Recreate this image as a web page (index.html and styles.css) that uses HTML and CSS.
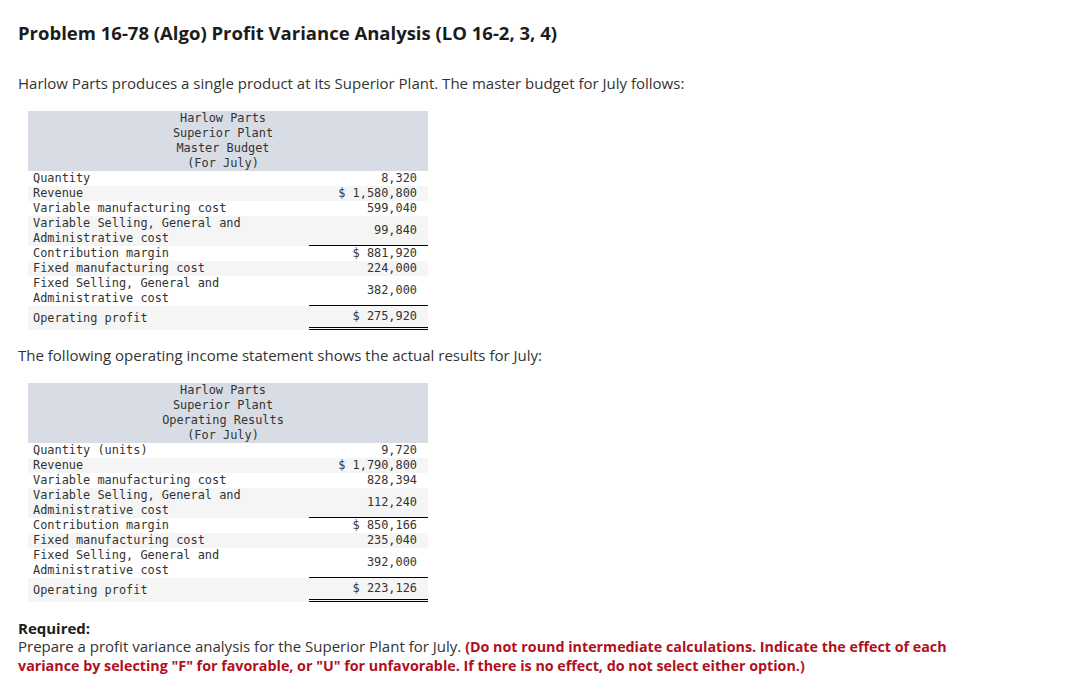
FILE: index.html
```html
<!DOCTYPE html>
<html>
<head>
<meta charset="utf-8">
<link rel="stylesheet" href="styles.css">
</head>
<body>
<div class="page">
  <h1 class="title">Problem 16-78 (Algo) Profit Variance Analysis (LO 16-2, 3, 4)</h1>
  <p class="intro">Harlow Parts produces a single product at its Superior Plant. The master budget for July follows:</p>
  <table class="stmt">
    <thead>
      <tr><th colspan="2">Harlow Parts<br>Superior Plant<br>Master Budget<br>(For July)</th></tr>
    </thead>
    <tbody>
      <tr><td class="lbl">Quantity</td><td class="num">8,320</td></tr>
      <tr><td class="lbl">Revenue</td><td class="num">$ 1,580,800</td></tr>
      <tr><td class="lbl">Variable manufacturing cost</td><td class="num">599,040</td></tr>
      <tr><td class="lbl">Variable Selling, General and Administrative cost</td><td class="num line">99,840</td></tr>
      <tr><td class="lbl">Contribution margin</td><td class="num">$ 881,920</td></tr>
      <tr><td class="lbl">Fixed manufacturing cost</td><td class="num">224,000</td></tr>
      <tr><td class="lbl">Fixed Selling, General and Administrative cost</td><td class="num line">382,000</td></tr>
      <tr class="total"><td class="lbl">Operating profit</td><td class="num dbl">$ 275,920</td></tr>
    </tbody>
  </table>
  <p class="intro second">The following operating income statement shows the actual results for July:</p>
  <table class="stmt">
    <thead>
      <tr><th colspan="2">Harlow Parts<br>Superior Plant<br>Operating Results<br>(For July)</th></tr>
    </thead>
    <tbody>
      <tr><td class="lbl">Quantity (units)</td><td class="num">9,720</td></tr>
      <tr><td class="lbl">Revenue</td><td class="num">$ 1,790,800</td></tr>
      <tr><td class="lbl">Variable manufacturing cost</td><td class="num">828,394</td></tr>
      <tr><td class="lbl">Variable Selling, General and Administrative cost</td><td class="num line">112,240</td></tr>
      <tr><td class="lbl">Contribution margin</td><td class="num">$ 850,166</td></tr>
      <tr><td class="lbl">Fixed manufacturing cost</td><td class="num">235,040</td></tr>
      <tr><td class="lbl">Fixed Selling, General and Administrative cost</td><td class="num line">392,000</td></tr>
      <tr class="total"><td class="lbl">Operating profit</td><td class="num dbl">$ 223,126</td></tr>
    </tbody>
  </table>
  <div class="required">
    <div class="req-head">Required:</div>
    <div class="req-text">Prepare a profit variance analysis for the Superior Plant for July. <strong class="warn">(Do not round intermediate calculations. Indicate the effect of each variance by selecting "F" for favorable, or "U" for unfavorable. If there is no effect, do not select either option.)</strong></div>
  </div>
</div>
</body>
</html>
```

FILE: styles.css
```css
html, body {
  margin: 0;
  padding: 0;
  background: #ffffff;
}

.page {
  padding: 22px 84px 0 18px;
  font-family: "Open Sans", "Liberation Sans", sans-serif;
  color: #333333;
}

.title {
  margin: 0;
  font-size: 18.5px;
  line-height: 22px;
  font-weight: 700;
  color: #1c1c1c;
}

.intro {
  margin: 30px 0 0 0;
  font-size: 15px;
  line-height: 18px;
}

.intro.second {
  margin-top: 16px;
}

.stmt {
  margin: 19px 0 0 10px;
  width: 400px;
  border-collapse: separate;
  border-spacing: 0;
  font-family: "DejaVu Sans Mono", "Liberation Mono", monospace;
  font-size: 11.9px;
  line-height: 15px;
  color: #333333;
}

.stmt th {
  background: #d8dce5;
  font-weight: 400;
  text-align: center;
  padding: 0 10px 0 0;
}

.stmt td {
  padding: 0;
  vertical-align: middle;
}

.stmt td.lbl {
  padding-left: 5px;
}

.stmt td.num {
  width: 108px;
  text-align: right;
  padding-right: 11px;
  white-space: nowrap;
}

.stmt tbody tr:nth-child(even) td {
  background: #f5f5f5;
}

.stmt td.line {
  border-bottom: 1px solid #000000;
}

.stmt tr.total td.num {
  padding-top: 3px;
  padding-bottom: 3px;
  vertical-align: top;
}

.stmt td.dbl {
  border-bottom: 3px double #000000;
}

.required {
  margin-top: 17px;
  font-size: 15px;
  line-height: 18px;
}

.req-head {
  font-weight: 700;
  color: #1c1c1c;
}

.warn {
  color: #b0101c;
  font-weight: 700;
  font-size: 14.3px;
}
```
